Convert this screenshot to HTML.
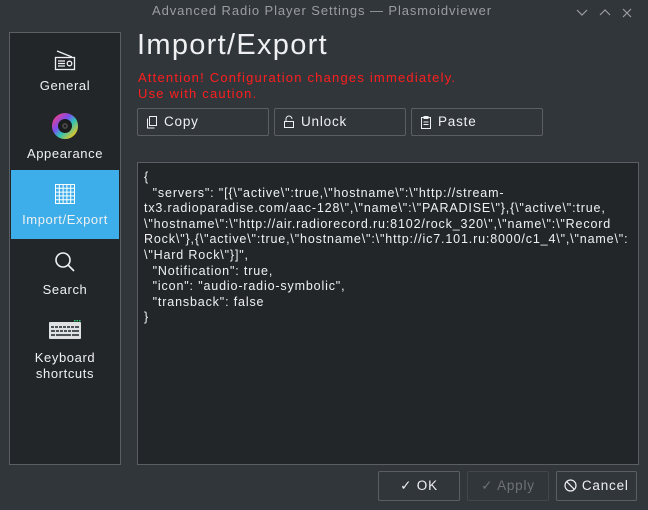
<!DOCTYPE html>
<html><head><style>
*{box-sizing:border-box;margin:0;padding:0}
body{width:648px;height:510px;background:#31363b;font-family:"Liberation Sans",sans-serif;color:#eff0f1;position:relative;overflow:hidden;font-size:13px}
.abs{position:absolute}
.title{left:0;width:648px;top:3px;text-align:center;color:#9a9ea3;font-size:13px;letter-spacing:.9px;padding-right:4px}
.side{left:9px;top:32px;width:112px;height:433px;background:#232629;border:1px solid #5b5f63}
.item{position:absolute;left:1px;width:108px;text-align:center;font-size:13px;color:#eff0f1;letter-spacing:.6px}
.sel{background:#3daee9;top:137px;height:69px}
.btn{position:absolute;border:1px solid #5b5f63;border-radius:2px;background:#31363b;height:28px;font-size:13.5px;color:#eff0f1;line-height:26px;letter-spacing:.8px}
.ta{left:137px;top:162px;width:502px;height:303px;background:#232629;border:1px solid #5b5f63;padding:7px 0 0 6px;font-size:12.5px;line-height:15.6px;white-space:pre;color:#eff0f1;letter-spacing:.85px;overflow:hidden}
</style></head><body>
<div class="abs title">Advanced Radio Player Settings — Plasmoidviewer</div>
<svg class="abs" style="left:570px;top:6px" width="70" height="14" viewBox="0 0 70 14" fill="none" stroke="#9a9ea3" stroke-width="1.2"><path d="M7 4l5 5 5-5"/><path d="M30 9l5-5 5 5"/><path d="M53 3l8 8M61 3l-8 8"/></svg>
<div class="abs side">
 <div class="item" style="top:15px"><svg width="24" height="24" viewBox="0 0 24 24" fill="none" stroke="#eff0f1" stroke-width="1.3"><path d="M4 3l15 6"/><rect x="2.5" y="9.5" width="19" height="12"/><path d="M5 13h7M5 15.5h7M5 18h7"/><circle cx="16.5" cy="15.5" r="2.3"/></svg><div style="margin-top:3px">General</div></div>
 <div class="item" style="top:80px"><svg width="26" height="26" viewBox="0 0 26 26"><circle cx="13" cy="13" r="12.5" fill="#1a1c1e"/><circle cx="13" cy="13" r="10" fill="none" stroke="url(#g)" stroke-width="6"/><defs><linearGradient id="g" x1="0" y1="0" x2="1" y2="1"><stop offset="0" stop-color="#e83e8c"/><stop offset=".35" stop-color="#7b4ef0"/><stop offset=".6" stop-color="#2ec4b6"/><stop offset="1" stop-color="#f5c518"/></linearGradient></defs><circle cx="13" cy="13" r="3" fill="#444"/><circle cx="13" cy="13" r="1" fill="#111"/></svg><div style="margin-top:4px">Appearance</div></div>
 <div class="item sel"><svg style="margin-top:13px" width="22" height="22" viewBox="0 0 22 22" fill="none" stroke="#fff" stroke-width="1"><rect x="1.5" y="1.5" width="19" height="19"/><path d="M5.3 1.5v19M9.1 1.5v19M12.9 1.5v19M16.7 1.5v19M1.5 5.3h19M1.5 9.1h19M1.5 12.9h19M1.5 16.7h19"/></svg><div style="margin-top:4px">Import/Export</div></div>
 <div class="item" style="top:217px"><svg width="24" height="24" viewBox="0 0 24 24" fill="none" stroke="#eff0f1" stroke-width="1.6"><circle cx="10" cy="10" r="7"/><path d="M15 15l6 6"/></svg><div style="margin-top:5px">Search</div></div>
 <div class="item" style="top:287px"><svg width="34" height="20" viewBox="0 0 34 20"><rect x="1" y="2" width="32" height="17" rx="1" fill="#dfe1e3"/><g fill="#4d5357"><rect x="3" y="6" width="3" height="2"/><rect x="7" y="6" width="3" height="2"/><rect x="11" y="6" width="3" height="2"/><rect x="15" y="6" width="3" height="2"/><rect x="19" y="6" width="3" height="2"/><rect x="23" y="6" width="3" height="2"/><rect x="27" y="6" width="4" height="2"/><rect x="3" y="10" width="4" height="2"/><rect x="8" y="10" width="3" height="2"/><rect x="12" y="10" width="3" height="2"/><rect x="16" y="10" width="3" height="2"/><rect x="20" y="10" width="3" height="2"/><rect x="24" y="10" width="7" height="2"/><rect x="3" y="14" width="4" height="2"/><rect x="8" y="14" width="15" height="2"/><rect x="24" y="14" width="7" height="2"/></g><g fill="#2ecc71"><rect x="26" y="0" width="1.5" height="1.5"/><rect x="28.5" y="0" width="1.5" height="1.5"/><rect x="31" y="0" width="1.5" height="1.5"/></g></svg><div style="margin-top:7px;line-height:16px">Keyboard<br>shortcuts</div></div>
</div>
<div class="abs" style="left:137px;top:29px;font-size:29px;color:#eff0f1;letter-spacing:1.3px">Import/Export</div>
<div class="abs" style="left:138px;top:70px;font-size:13px;line-height:16px;color:#ff1e1e;letter-spacing:1.2px">Attention! Configuration changes immediately.<br>Use with caution.</div>
<div class="btn" style="left:137px;top:108px;width:132px"><svg style="position:absolute;left:8px;top:7px" width="12" height="13" viewBox="0 0 12 13" fill="none" stroke="#eff0f1"><path d="M3.5 .5h7v9h-7z"/><path d="M1.5 2.5v9.5h7"/></svg><span style="margin-left:26px">Copy</span></div>
<div class="btn" style="left:274px;top:108px;width:132px"><svg style="position:absolute;left:8px;top:6px" width="12" height="14" viewBox="0 0 12 14" fill="none" stroke="#eff0f1"><path d="M3 6.5V4a3 3 0 0 1 6 0"/><rect x="1.5" y="6.5" width="9" height="6"/></svg><span style="margin-left:26px">Unlock</span></div>
<div class="btn" style="left:411px;top:108px;width:132px"><svg style="position:absolute;left:8px;top:6px" width="12" height="14" viewBox="0 0 12 14" fill="none" stroke="#eff0f1"><rect x="1.5" y="2.5" width="9" height="11"/><path d="M4 1.5h4v2H4zM3.5 7h5M3.5 9.5h5"/></svg><span style="margin-left:26px">Paste</span></div>
<div class="abs ta">{
  "servers": "[{\"active\":true,\"hostname\":\"http://stream-
tx3.radioparadise.com/aac-128\",\"name\":\"PARADISE\"},{\"active\":true,
\"hostname\":\"http://air.radiorecord.ru:8102/rock_320\",\"name\":\"Record
Rock\"},{\"active\":true,\"hostname\":\"http://ic7.101.ru:8000/c1_4\",\"name\":
\"Hard Rock\"}]",
  "Notification": true,
  "icon": "audio-radio-symbolic",
  "transback": false
}</div>
<div class="btn" style="left:378px;top:471px;width:82px;height:30px;line-height:28px;text-align:center">✓ OK</div>
<div class="btn" style="left:467px;top:471px;width:82px;height:30px;line-height:28px;text-align:center;color:#6e7276;border-color:#43474b">✓ Apply</div>
<div class="btn" style="left:556px;top:471px;width:81px;height:30px;line-height:28px;text-align:center"><svg style="vertical-align:-2px" width="13" height="13" viewBox="0 0 13 13" fill="none" stroke="#eff0f1" stroke-width="1.2"><circle cx="6.5" cy="6.5" r="5.5"/><path d="M2.6 2.6l7.8 7.8"/></svg> Cancel</div>
</body></html>
